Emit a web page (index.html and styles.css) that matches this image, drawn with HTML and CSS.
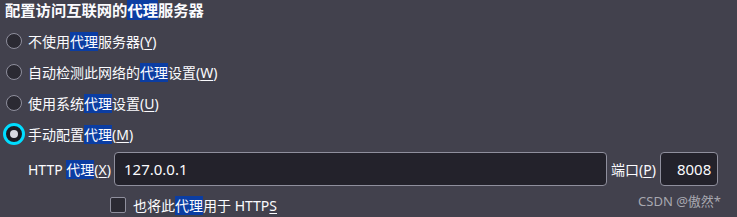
FILE: index.html
```html
<!DOCTYPE html>
<html lang="zh-CN">
<head>
<meta charset="utf-8">
<link rel="stylesheet" href="styles.css">
</head>
<body>
<div class="panel">
  <h3 class="title">配置访问互联网的<span class="hl">代理</span>服务器</h3>
  <div class="options">
    <label class="opt"><span class="radio"></span><span>不使用<span class="hl">代理</span>服务器(<u>Y</u>)</span></label>
    <label class="opt"><span class="radio"></span><span>自动检测此网络的<span class="hl">代理</span>设置(<u>W</u>)</span></label>
    <label class="opt"><span class="radio"></span><span>使用系统<span class="hl">代理</span>设置(<u>U</u>)</span></label>
    <label class="opt"><span class="radio checked"><span class="dot"></span></span><span>手动配置<span class="hl">代理</span>(<u>M</u>)</span></label>
  </div>
  <div class="proxy-row">
    <span class="field-label">HTTP <span class="hl">代理</span>(<u>X</u>)</span>
    <div class="input host">127.0.0.1</div>
    <span class="port-label">端口(<u>P</u>)</span>
    <div class="input port">8008</div>
  </div>
  <div class="check-row">
    <span class="checkbox"></span>
    <span>也将此<span class="hl">代理</span>用于 HTTP<u>S</u></span>
    <span class="watermark">CSDN @傲然*</span>
  </div>
</div>
</body>
</html>
```
FILE: styles.css
```css
html, body {
  margin: 0;
  padding: 0;
  background: #42414d;
}
body {
  width: 737px;
  height: 217px;
  overflow: hidden;
  color: #fbfbfe;
  font-family: "Noto Sans", "Noto Sans CJK SC", sans-serif;
  font-size: 14px;
}
.panel {
  display: flex;
  flex-direction: column;
  padding: 0 0 0 5px;
}
.title {
  margin: 0;
  font-size: 15.3px;
  font-weight: bold;
  line-height: 20px;
  height: 22px;
}
.hl {
  background: #0b3da2;
}
u {
  text-decoration-thickness: 1px;
  text-underline-offset: 2px;
}
.options {
  display: flex;
  flex-direction: column;
  margin-top: 3px;
}
.opt {
  display: flex;
  align-items: center;
  gap: 6px;
  height: 31px;
}
.radio {
  box-sizing: border-box;
  width: 16px;
  height: 16px;
  margin-left: 1px;
  border-radius: 50%;
  border: 1px solid #8f8f9d;
  background: #2b2a33;
  display: flex;
  align-items: center;
  justify-content: center;
  flex: none;
}
.radio.checked {
  width: 22px;
  height: 22px;
  margin-left: -2px;
  margin-right: -3px;
  border: 3px solid #00ddff;
  background: #1c1b22;
}
.dot {
  width: 8px;
  height: 8px;
  border-radius: 50%;
  background: #d8d8e0;
}
.proxy-row {
  display: flex;
  align-items: center;
  height: 34px;
  margin-top: 3px;
  padding-left: 23px;
}
.field-label {
  width: 86px;
  flex: none;
}
.input {
  box-sizing: border-box;
  height: 34px;
  border: 1px solid #8f8f9d;
  border-radius: 4px;
  background: #23222b;
  display: flex;
  align-items: center;
  font-size: 15px;
}
.host {
  width: 493px;
  padding-left: 9px;
}
.port-label {
  margin: 0 4px 0 4px;
}
.port {
  width: 58px;
  padding-left: 16px;
}
.check-row {
  display: flex;
  align-items: center;
  height: 22px;
  margin-top: 8px;
  padding-left: 105px;
  gap: 7px;
}
.checkbox {
  box-sizing: border-box;
  width: 16px;
  height: 16px;
  border: 1px solid #8f8f9d;
  border-radius: 2px;
  background: #2b2a33;
  flex: none;
}
.watermark {
  margin-left: auto;
  margin-right: 16px;
  color: #a8a8b0;
  font-size: 13px;
  position: relative;
  top: -5px;
}
```
